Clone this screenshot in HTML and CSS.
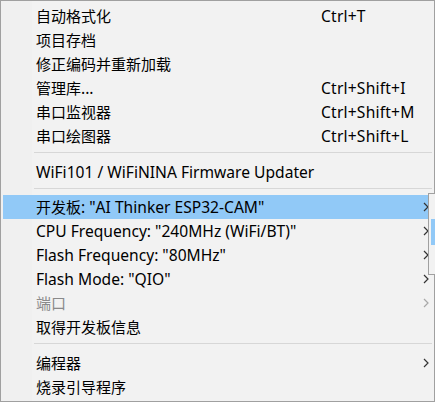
FILE: index.html
```html
<!DOCTYPE html>
<html lang="zh">
<head>
<meta charset="utf-8">
<link rel="stylesheet" href="styles.css">
</head>
<body>
<div class="menu">
  <div class="item"><span class="label">自动格式化</span><span class="key lat">Ctrl+T</span></div>
  <div class="item"><span class="label">项目存档</span></div>
  <div class="item"><span class="label">修正编码并重新加载</span></div>
  <div class="item"><span class="label">管理库<span class="lat">...</span></span><span class="key lat">Ctrl+Shift+I</span></div>
  <div class="item"><span class="label">串口监视器</span><span class="key lat">Ctrl+Shift+M</span></div>
  <div class="item"><span class="label">串口绘图器</span><span class="key lat">Ctrl+Shift+L</span></div>
  <div class="sep"></div>
  <div class="item"><span class="label lat">WiFi101 / WiFiNINA Firmware Updater</span></div>
  <div class="sep sep-b"></div>
  <div class="item active"><span class="label">开发板<span class="lat">: "AI Thinker ESP32-CAM"</span></span><svg class="arrow" viewBox="0 0 6 10"><polyline points="1,1 5,5 1,9"/></svg></div>
  <div class="item"><span class="label lat">CPU Frequency: "240MHz (WiFi/BT)"</span><svg class="arrow" viewBox="0 0 6 10"><polyline points="1,1 5,5 1,9"/></svg></div>
  <div class="item"><span class="label lat">Flash Frequency: "80MHz"</span><svg class="arrow" viewBox="0 0 6 10"><polyline points="1,1 5,5 1,9"/></svg></div>
  <div class="item"><span class="label lat">Flash Mode: "QIO"</span><svg class="arrow" viewBox="0 0 6 10"><polyline points="1,1 5,5 1,9"/></svg></div>
  <div class="item disabled"><span class="label">端口</span><svg class="arrow" viewBox="0 0 6 10"><polyline points="1,1 5,5 1,9"/></svg></div>
  <div class="item"><span class="label">取得开发板信息</span></div>
  <div class="sep"></div>
  <div class="item"><span class="label">编程器</span><svg class="arrow" viewBox="0 0 6 10"><polyline points="1,1 5,5 1,9"/></svg></div>
  <div class="item"><span class="label">烧录引导程序</span></div>
  <div class="submenu"><div class="sub-active"></div></div>
</div>
</body>
</html>
```
FILE: styles.css
```css
html, body {
  margin: 0;
  padding: 0;
  background: #f2f2f2;
}
.menu {
  position: relative;
  box-sizing: border-box;
  width: 435px;
  height: 402px;
  border: 1px solid #a0a0a0;
  background: linear-gradient(to right, #f0f0f0 0, #f0f0f0 31px, #f2f2f2 31px);
  padding: 3px 2px 2px 2px;
  font-family: "Noto Sans", "Noto Sans CJK SC", sans-serif;
  font-size: 15px;
  color: #000;
}
.item {
  display: flex;
  align-items: center;
  height: 24px;
  padding-left: 33px;
  position: relative;
  white-space: nowrap;
}
.item .label {
  flex: none;
  line-height: 24px;
}
.lat {
  font-size: 15.6px;
}
.item .key {
  position: absolute;
  left: 318px;
  line-height: 24px;
  letter-spacing: 0.2px;
}
.item.active {
  background: #91c9f7;
}
.item.disabled {
  color: #8a8a8a;
}
.arrow {
  position: absolute;
  left: 420px;
  top: 7px;
  width: 6px;
  height: 10px;
  fill: none;
  stroke: #333;
  stroke-width: 1.2;
}
.disabled .arrow {
  stroke: #a8a8a8;
}
.sep {
  height: 12px;
  position: relative;
}
.sep-b {
  height: 11px;
}
.sep::after {
  content: "";
  position: absolute;
  left: 31px;
  right: 0;
  top: 4px;
  height: 1px;
  background: #d7d7d7;
}
.submenu {
  position: absolute;
  left: 427px;
  top: 192px;
  width: 20px;
  height: 80px;
  border: 1px solid #a0a0a0;
  background: #f2f2f2;
  z-index: 2;
}
.sub-active {
  position: absolute;
  left: 2px;
  top: 25px;
  right: 0;
  height: 26px;
  background: #91c9f7;
}
```
